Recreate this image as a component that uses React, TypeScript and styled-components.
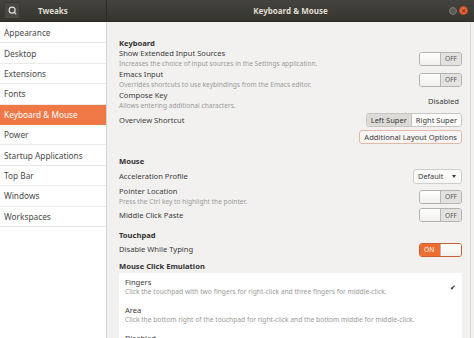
import styled, { createGlobalStyle } from 'styled-components'
import { Search } from 'lucide-react'

const GlobalStyle = createGlobalStyle`
    html, body {
        margin: 0;
        padding: 0;
        background: #f2f1f0;
    }
    body {
        font-family: 'Noto Sans', 'Open Sans', sans-serif;
        color: #3c3c3c;
    }
`

const Window = styled.div`
    width: 474px;
    height: 338px;
    display: flex;
    flex-direction: column;
    overflow: hidden;
    position: relative;
`
const HeaderBar = styled.div`
    height: 22px;
    flex: none;
    display: flex;
    background: linear-gradient(#45433f, #36342f);
    border-bottom: 1px solid #2a2926;
    box-sizing: border-box;
`
const HeaderSide = styled.div`
    width: 107px;
    flex: none;
    display: flex;
    align-items: center;
    padding-left: 4px;
    box-sizing: border-box;
    border-right: 1px solid #2c2b28;
`
const SearchButton = styled.span`
    width: 16px;
    height: 17px;
    display: flex;
    align-items: center;
    justify-content: center;
    background: #4a4843;
    border: 1px solid #3a3834;
    border-radius: 2px;
    box-sizing: border-box;
    color: #e6e3dc;
`
const HeaderTitle = styled.span<{ $offset?: number }>`
    font-size: 8px;
    font-weight: 700;
    color: #dfdbd2;
    margin-left: ${(p) => p.$offset ?? 0}px;
`
const HeaderMain = styled.div`
    flex: 1;
    display: flex;
    align-items: center;
    justify-content: center;
    position: relative;
`
const WindowButtons = styled.div`
    position: absolute;
    right: 6px;
    top: 6px;
    display: flex;
    gap: 2px;
    align-items: center;
`
const Dot = styled.span<{ $close?: boolean }>`
    width: ${(p) => (p.$close ? 9 : 8)}px;
    height: ${(p) => (p.$close ? 9 : 8)}px;
    border-radius: 50%;
    background: ${(p) => (p.$close ? '#e9643a' : '#5c5a55')};
    border: 1px solid ${(p) => (p.$close ? '#c44f28' : '#7a7873')};
    box-sizing: border-box;
    display: flex;
    align-items: center;
    justify-content: center;
    color: #4a2212;
    font-size: 6px;
    line-height: 1;
`
const Body = styled.div`
    flex: 1;
    display: flex;
    min-height: 0;
`
const Sidebar = styled.div`
    width: 107px;
    flex: none;
    background: #ffffff;
    border-right: 1px solid #d6d4d0;
    box-sizing: border-box;
    padding-top: 1px;
`
const SideItem = styled.div<{ $active?: boolean }>`
    height: 20.4px;
    box-sizing: border-box;
    display: flex;
    align-items: center;
    padding-left: 4px;
    font-size: 8.3px;
    color: ${(p) => (p.$active ? '#ffffff' : '#4a4a4a')};
    background: ${(p) => (p.$active ? '#f07746' : 'transparent')};
    border-bottom: 1px solid ${(p) => (p.$active ? '#f07746' : '#ecebea')};
`
const Content = styled.div`
    flex: 1;
    padding: 16px 12px 0 12px;
    box-sizing: border-box;
    display: flex;
    flex-direction: column;
    position: relative;
    overflow: hidden;
`
const ScrollIndicator = styled.span`
    position: absolute;
    right: 3px;
    top: 0;
    bottom: 0;
    width: 1px;
    background: #dedcd8;
`
const SectionTitle = styled.div<{ $gap?: number }>`
    flex: none;
    height: 10px;
    line-height: 10px;
    font-size: 7.6px;
    font-weight: 700;
    color: #333333;
    margin-top: ${(p) => p.$gap ?? 0}px;
`
const Row = styled.div<{ $h: number }>`
    flex: none;
    height: ${(p) => p.$h}px;
    display: flex;
    align-items: center;
    justify-content: space-between;
`
const LabelBlock = styled.div`
    display: flex;
    flex-direction: column;
`
const Label = styled.span`
    font-size: 7.6px;
    line-height: 11px;
    color: #3c3c3c;
`
const Desc = styled.span`
    font-size: 6.6px;
    line-height: 10px;
    color: #9a9a98;
`
const SwitchBox = styled.span<{ $on?: boolean }>`
    width: 43px;
    height: 14px;
    display: flex;
    flex-direction: ${(p) => (p.$on ? 'row' : 'row-reverse')};
    border: 1px solid ${(p) => (p.$on ? '#c8602f' : '#b3b2af')};
    border-radius: 3px;
    box-sizing: border-box;
    overflow: hidden;
`
const SwitchLabel = styled.span<{ $on?: boolean }>`
    flex: 1;
    display: flex;
    align-items: center;
    justify-content: ${(p) => (p.$on ? 'flex-start' : 'flex-end')};
    padding: 0 4px;
    font-size: 6.6px;
    color: ${(p) => (p.$on ? '#ffffff' : '#5a5a5a')};
    background: ${(p) => (p.$on ? '#ef6c33' : '#e3e2df')};
`
const SwitchKnob = styled.span<{ $on?: boolean }>`
    width: 20px;
    background: linear-gradient(#ffffff, #f1f0ee);
    border-${(p) => (p.$on ? 'left' : 'right')}: 1px solid #b8b7b4;
`
const ValueText = styled.span`
    font-size: 7.6px;
    color: #3c3c3c;
    margin-right: 3px;
`
const ButtonGroup = styled.div`
    display: flex;
    height: 14px;
    border: 1px solid #c6c5c2;
    border-radius: 3px;
    overflow: hidden;
    box-sizing: border-box;
`
const GroupButton = styled.span<{ $pressed?: boolean }>`
    display: flex;
    align-items: center;
    padding: 0 4px;
    font-size: 7.5px;
    color: #3c3c3c;
    background: ${(p) => (p.$pressed ? '#dcdbd8' : '#fbfbfa')};
    & + & {
        border-left: 1px solid #c6c5c2;
    }
`
const PlainButton = styled.span`
    height: 14px;
    display: flex;
    align-items: center;
    padding: 0 4px;
    font-size: 7.6px;
    color: #3c3c3c;
    background: #f7f6f5;
    border: 1px solid #e3b9a6;
    border-radius: 3px;
    box-sizing: border-box;
`
const Dropdown = styled.span`
    width: 49px;
    height: 15px;
    display: flex;
    align-items: center;
    justify-content: space-between;
    padding: 0 5px 0 4px;
    font-size: 7.4px;
    color: #3c3c3c;
    background: #f9f9f8;
    border: 1px solid #cfcecb;
    border-radius: 3px;
    box-sizing: border-box;
`
const Caret = styled.span`
    width: 0;
    height: 0;
    border-left: 2.5px solid transparent;
    border-right: 2.5px solid transparent;
    border-top: 3px solid #3c3c3c;
`
const ListBox = styled.div`
    flex: none;
    margin-top: 2px;
    background: #ffffff;
`
const ListItem = styled.div`
    height: 28px;
    padding: 4px 6px 0 6px;
    box-sizing: border-box;
    display: flex;
    align-items: flex-start;
    justify-content: space-between;
`
const ListLabel = styled.span`
    font-size: 7.6px;
    line-height: 10px;
    color: #3c3c3c;
`
const ListDesc = styled.span`
    font-size: 6.7px;
    line-height: 9px;
    color: #9a9a98;
`
const Check = styled.span`
    font-size: 7px;
    color: #222;
    margin-top: 6px;
`

const Switch = ({ on }: { on?: boolean }) => (
    <SwitchBox $on={on}>
        <SwitchLabel $on={on}>{on ? 'ON' : 'OFF'}</SwitchLabel>
        <SwitchKnob $on={on} />
    </SwitchBox>
)

const sideItems = [
    'Appearance',
    'Desktop',
    'Extensions',
    'Fonts',
    'Keyboard & Mouse',
    'Power',
    'Startup Applications',
    'Top Bar',
    'Windows',
    'Workspaces',
]

const emulation = [
    {
        name: 'Fingers',
        desc: 'Click the touchpad with two fingers for right-click and three fingers for middle-click.',
        checked: true,
    },
    {
        name: 'Area',
        desc: 'Click the bottom right of the touchpad for right-click and the bottom middle for middle-click.',
        checked: false,
    },
    { name: 'Disabled', desc: "Don't use mouse click emulation.", checked: false },
]

const App = () => {
    return (
        <>
            <GlobalStyle />
            <Window>
                <HeaderBar>
                    <HeaderSide>
                        <SearchButton>
                            <Search size={9} strokeWidth={3} />
                        </SearchButton>
                        <HeaderTitle $offset={18}>Tweaks</HeaderTitle>
                    </HeaderSide>
                    <HeaderMain>
                        <HeaderTitle>Keyboard &amp; Mouse</HeaderTitle>
                        <WindowButtons>
                            <Dot />
                            <Dot $close>✕</Dot>
                        </WindowButtons>
                    </HeaderMain>
                </HeaderBar>
                <Body>
                    <Sidebar>
                        {sideItems.map((item) => (
                            <SideItem key={item} $active={item === 'Keyboard & Mouse'}>
                                {item}
                            </SideItem>
                        ))}
                    </Sidebar>
                    <Content>
                        <ScrollIndicator />
                        <SectionTitle>Keyboard</SectionTitle>
                        <Row $h={21}>
                            <LabelBlock>
                                <Label>Show Extended Input Sources</Label>
                                <Desc>Increases the choice of input sources in the Settings application.</Desc>
                            </LabelBlock>
                            <Switch />
                        </Row>
                        <Row $h={21}>
                            <LabelBlock>
                                <Label>Emacs Input</Label>
                                <Desc>Overrides shortcuts to use keybindings from the Emacs editor.</Desc>
                            </LabelBlock>
                            <Switch />
                        </Row>
                        <Row $h={21}>
                            <LabelBlock>
                                <Label>Compose Key</Label>
                                <Desc>Allows entering additional characters.</Desc>
                            </LabelBlock>
                            <ValueText>Disabled</ValueText>
                        </Row>
                        <Row $h={18}>
                            <Label>Overview Shortcut</Label>
                            <ButtonGroup>
                                <GroupButton $pressed>Left Super</GroupButton>
                                <GroupButton>Right Super</GroupButton>
                            </ButtonGroup>
                        </Row>
                        <Row $h={16}>
                            <span />
                            <PlainButton>Additional Layout Options</PlainButton>
                        </Row>
                        <SectionTitle $gap={11}>Mouse</SectionTitle>
                        <Row $h={20}>
                            <Label>Acceleration Profile</Label>
                            <Dropdown>
                                Default
                                <Caret />
                            </Dropdown>
                        </Row>
                        <Row $h={21}>
                            <LabelBlock>
                                <Label>Pointer Location</Label>
                                <Desc>Press the Ctrl key to highlight the pointer.</Desc>
                            </LabelBlock>
                            <Switch />
                        </Row>
                        <Row $h={16}>
                            <Label>Middle Click Paste</Label>
                            <Switch />
                        </Row>
                        <SectionTitle $gap={7}>Touchpad</SectionTitle>
                        <Row $h={19}>
                            <Label>Disable While Typing</Label>
                            <Switch on />
                        </Row>
                        <SectionTitle $gap={2}>Mouse Click Emulation</SectionTitle>
                        <ListBox>
                            {emulation.map((e) => (
                                <ListItem key={e.name}>
                                    <LabelBlock>
                                        <ListLabel>{e.name}</ListLabel>
                                        <ListDesc>{e.desc}</ListDesc>
                                    </LabelBlock>
                                    {e.checked && <Check>✔</Check>}
                                </ListItem>
                            ))}
                        </ListBox>
                    </Content>
                </Body>
            </Window>
        </>
    )
}

export default App
